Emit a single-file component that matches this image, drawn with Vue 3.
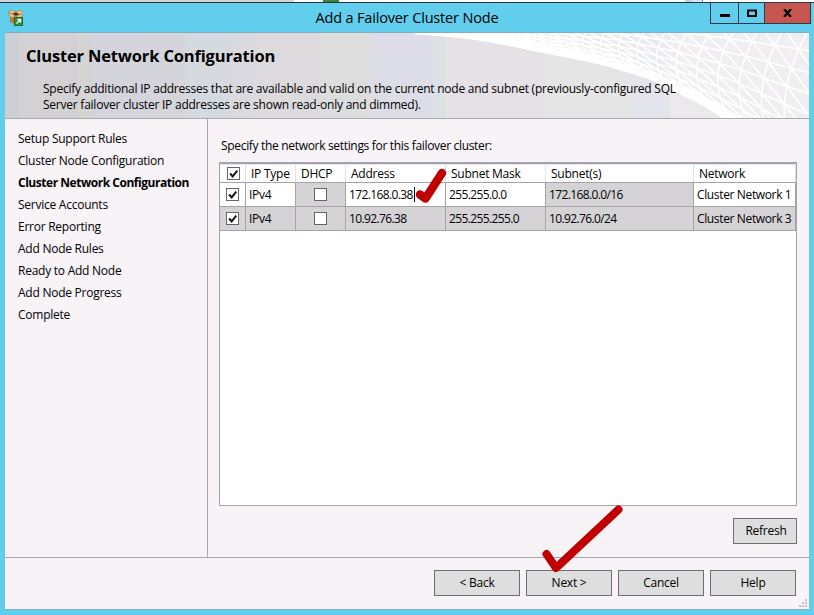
<script setup>
const steps = ['Setup Support Rules', 'Cluster Node Configuration', 'Cluster Network Configuration', 'Service Accounts', 'Error Reporting', 'Add Node Rules', 'Ready to Add Node', 'Add Node Progress', 'Complete']
const rows = [
  { ip: '172.168.0.38', mask: '255.255.0.0', subnet: '172.168.0.0/16', net: 'Cluster Network 1', editing: true },
  { ip: '10.92.76.38', mask: '255.255.255.0', subnet: '10.92.76.0/24', net: 'Cluster Network 3', editing: false }
]

// Banner mesh: columns fan out to the right, rows crowd toward the lower curve.
const edge = [[415, 0], [470, 5], [535, 17], [605, 31], [670, 51], [735, 85], [800, 130], [900, 215]]
function edgeY(x) {
  for (let i = 1; i < edge.length; i++) {
    if (x <= edge[i][0]) {
      const [ax, ay] = edge[i - 1]
      const [bx, by] = edge[i]
      return ay + ((by - ay) * (x - ax)) / (bx - ax)
    }
  }
  return 215
}
const cols = []
for (let bx = 430, step = 12; bx < 900; bx += step, step += 0.7) cols.push(bx)
const ROWS = 13
function node(c, r) {
  const bx = cols[c]
  const k = (bx - 430) / 470
  const tx = bx - 8 - 30 * k
  const mx = bx - 14 - 120 * k
  const ty = -12 - 12 * k
  const t = r / ROWS
  const y = ty + (edgeY(bx) - ty) * (1 - Math.pow(1 - t, 1.3))
  const x = (1 - t) * (1 - t) * tx + 2 * t * (1 - t) * mx + t * t * bx
  return x.toFixed(1) + ' ' + y.toFixed(1)
}
let mesh = ''
for (let c = 0; c < cols.length - 1; c++) {
  for (let r = 0; r < ROWS; r++) {
    mesh += `M${node(c, r + 1)}L${node(c, r)}L${node(c + 1, r)}M${node(c, r)}L${node(c + 1, r + 1)}`
  }
}
</script>

<template>
  <div class="screen">
    <div class="behind"><i class="b1"></i><i class="b2"></i><i class="b3"></i><i class="b4"></i><i class="b5"></i></div>
    <header class="titlebar">
      <svg class="appicon" width="16" height="17" viewBox="0 0 16 17">
        <path d="M2 5l6 2 5-2v8l-5 3-6-3z" fill="#d9a55c" />
        <path d="M2 5l5 2v8l-5-2z" fill="#b97b38" />
        <path d="M3 4l5-1 5 2-5 2z" fill="#563413" />
        <path d="M0 3l4-2 4 2-4 2zM8 3l4-2 3 2-3 3zM0 5l3-1 4 3-3 2zM8 7l5-2 2 2-4 2z" fill="#ecc178" stroke="#a76b31" stroke-width=".5" />
        <rect x="6.5" y="8.5" width="8" height="8" fill="#2f9138" stroke="#246c31" />
        <path d="M8.5 14.5l4-4M9.5 10.5h3v3" fill="none" stroke="#fff" stroke-width="1.3" />
      </svg>
      <h1>Add a Failover Cluster Node</h1>
      <div class="controls">
        <span class="min"><svg width="10" height="3"><path d="M0 0h10v3H0z" /></svg></span>
        <span class="max"><svg width="10" height="8"><path d="M1 1.5h8v5.5H1z" fill="none" stroke="#000" stroke-width="2" /></svg></span>
        <span class="close"><svg width="9" height="8"><path d="M1 0l7 8M8 0L1 8" fill="none" stroke="#000" stroke-width="2.2" /></svg></span>
      </div>
    </header>
    <main class="window">
      <section class="banner">
        <svg class="mesh" width="804" height="85" viewBox="5 0 804 85">
          <path d="M415 0Q480 3 535 17Q640 36 670 51Q705 65 735 85H809V0Z" fill="#fff" fill-opacity=".25" />
          <path :d="mesh" fill="none" stroke="#fff" stroke-width="1.6" />
          <path d="M415 0Q480 3 535 17Q640 36 670 51Q705 65 735 85" fill="none" stroke="#fff" stroke-width="3" />
        </svg>
        <div class="heading">
          <h2>Cluster Network Configuration</h2>
          <p class="l1">Specify additional IP addresses that are available and valid on the current node and subnet (previously-configured SQL</p>
          <p class="l2">Server failover cluster IP addresses are shown read-only and dimmed).</p>
        </div>
      </section>
      <div class="body">
        <nav>
          <div v-for="(s, i) in steps" :key="s" :class="{ current: i === 2 }">{{ s }}</div>
        </nav>
        <section class="content">
          <label>Specify the network settings for this failover cluster:</label>
          <div class="list">
            <div class="row head">
              <span class="cc"><b class="box"><svg viewBox="0 0 13 13"><path d="M2.500 6.500l3 3.500L11 3" /></svg></b></span>
              <span>IP Type</span><span>DHCP</span><span>Address</span><span>Subnet Mask</span><span>Subnet(s)</span><span>Network</span>
            </div>
            <div v-for="r in rows" :key="r.ip" class="row" :class="r.editing ? 'edit' : 'dim'">
              <span class="cc"><b class="box"><svg viewBox="0 0 13 13"><path d="M2.500 6.500l3 3.500L11 3" /></svg></b></span>
              <span>IPv4</span>
              <span class="cc ro"><b class="box"></b></span>
              <span class="num">{{ r.ip }}<i v-if="r.editing" class="caret"></i></span>
              <span class="num">{{ r.mask }}</span>
              <span class="num ro">{{ r.subnet }}</span>
              <span class="net">{{ r.net }}</span>
            </div>
          </div>
          <button class="refresh">Refresh</button>
        </section>
      </div>
      <footer>
        <button>&lt; Back</button><button>Next &gt;</button><button>Cancel</button><button>Help</button>
        <svg class="grip" width="8" height="8"><path d="M6 0h2v2H6zM3 3h2v2H3zM6 3h2v2H6zM0 6h2v2H0zM3 6h2v2H3zM6 6h2v2H6z" fill="#c4c1c5" /></svg>
      </footer>
    </main>
    <svg class="marks" width="814" height="615">
      <g fill="none" stroke="#c00000" stroke-linecap="round" stroke-linejoin="round">
        <path d="M420 194.500L425.500 198.500L442 173" stroke-width="8.500" />
        <path d="M546.500 554L556 568L618.500 509.500" stroke-width="8" />
      </g>
    </svg>
  </div>
</template>

<style>
body { margin: 0; overflow: hidden; }
</style>

<style scoped>
* { box-sizing: border-box; }
.screen { position: relative; width: 814px; height: 615px; background: #61ceee; font: 12px/16px "Open Sans", "Noto Sans", sans-serif; letter-spacing: -.25px; color: #000; overflow: hidden; }
.behind { height: 3px; display: flex; background: #fff; border-bottom: 1px solid #25343b; }
.behind i { height: 2px; }
.b1 { width: 294px; background: #d5d3d7; }
.b2 { width: 29px; }
.b3 { width: 16px; background: #398638; }
.b4 { width: 346px; }
.b5 { width: 18px; background: #d6e8f0; border-right: 1px solid #7c8b92; border-left: 7px solid #bcd3dd; }
.titlebar { position: relative; height: 29px; display: flex; justify-content: center; }
.appicon { position: absolute; left: 8px; top: 6px; }
h1 { margin: 4px 0 0; font-size: 14.5px; line-height: 21px; font-weight: 400; letter-spacing: -.17px; }
.controls { position: absolute; right: 3px; top: -1px; height: 22px; display: flex; border: 1px solid #263d47; }
.controls span { display: flex; align-items: center; justify-content: center; }
.min { width: 27px; padding-top: 5px; }
.max { width: 27px; border-left: 1px solid #263d47; border-right: 1px solid #263d47; }
.close { width: 45px; background: #c75650; }
.window { width: 804px; height: 578px; margin-left: 5px; background: #f7f3f7; border-top: 1px solid #87a9c3; border-bottom: 1px solid #87b4c9; display: flex; flex-direction: column; }
.banner { position: relative; height: 86px; flex: none; border-bottom: 1px solid #aaa9b0; background: linear-gradient(90deg, #cdd0d2 0 14px, #d3d1d4 14px 73px, #d4d4d3 73px 87px, #d4d4dd 87px 150px, #d5d4da 150px 180px, #d5d9e0 180px 226px, #d9d9df 226px 250px, #dcdadd 250px 315px, #dddddd 315px 365px, #dddde7 365px 427px, #dce1e5 427px 440px, #e5e1e5 440px 540px, #e6e5e6 540px 628px, #e3e4ec 628px 665px, #ece9ed 665px 100%); }
.mesh { position: absolute; left: 0; top: 0; }
.heading { position: relative; padding: 12px 0 0 21px; }
h2 { margin: 0; font-size: 16.500px; line-height: 22px; font-weight: 700; letter-spacing: -.16px; }
p { margin: 0 0 0 17px; white-space: nowrap; letter-spacing: -.235px; }
.l1 { padding-top: 14px; }
.body { height: 438px; flex: none; display: flex; }
nav { width: 203px; border-right: 1px solid #aaa8ad; padding: 9px 0 0 13px; line-height: 22px; white-space: nowrap; }
.current { font-weight: 700; letter-spacing: -.47px; }
.content { flex: 1; padding: 19px 12px 0 11px; display: flex; flex-direction: column; }
label { padding-left: 2px; height: 24px; letter-spacing: -.32px; }
.list { height: 344px; border: 1px solid #a5a3aa; border-top: 2px solid #a5a3ad; background: #fff; }
.row { display: grid; grid-template-columns: 26px 50px 50px 100px 100px 148px 102px; width: 576px; height: 24px; border-bottom: 1px solid #a5a3a6; line-height: 23px; white-space: nowrap; }
.row > span { padding-left: 3px; border-right: 1px solid #a5a3a6; }
.row .num { letter-spacing: -.62px; }
.row .net { letter-spacing: -.36px; }
.row.head { height: 19px; line-height: 17px; border-top: 1px solid #e9e4e8; }
.row.head > span { padding-left: 5px; border-right-color: #e7e1e6; }
.row.head > .cc { padding: 0 0 0 1px; height: 16px; }
.row .cc { display: flex; align-items: center; justify-content: center; padding: 0; }
.dim, .ro { background: #d5d3d6; }
.box { width: 13px; height: 13px; border: 1px solid #66656a; background: #fff; display: block; }
.box svg { width: 11px; height: 11px; display: block; }
.box path { fill: none; stroke: #151515; stroke-width: 2.400; }
.caret { display: inline-block; width: 1px; height: 15px; margin-left: 1px; background: #000; vertical-align: -3px; }
.refresh { align-self: flex-end; margin-top: 12px; width: 64px; height: 26px; padding-left: 2px; }
button { width: 86px; height: 26px; border: 1px solid #707074; border-radius: 0; background: #dedede; font: inherit; letter-spacing: inherit; color: #000; padding: 0; }
footer { position: relative; flex: 1; border-top: 1px solid #aaa8ad; padding: 12px 13px 0 0; display: flex; justify-content: flex-end; gap: 6px; }
.grip { position: absolute; right: 2px; bottom: 2px; }
.marks { position: absolute; left: 0; top: 0; pointer-events: none; }
</style>
